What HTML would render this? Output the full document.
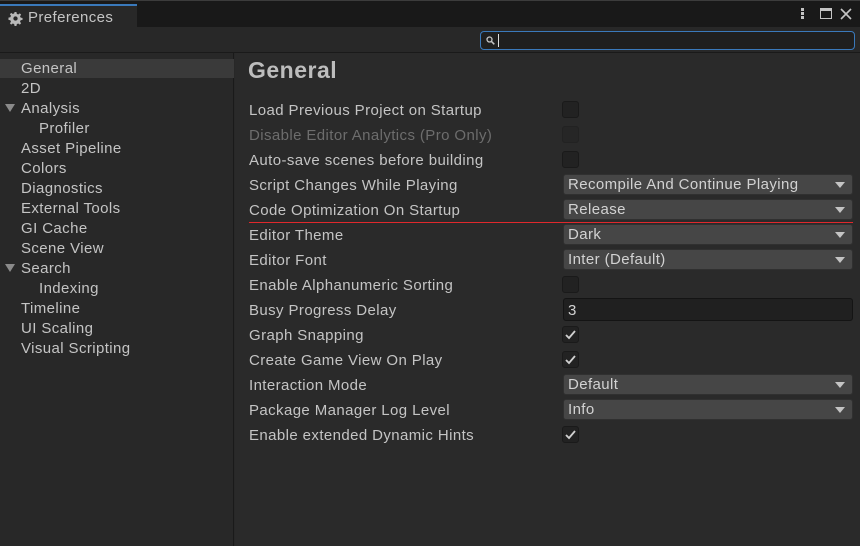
<!DOCTYPE html>
<html><head><meta charset="utf-8"><style>
*{margin:0;padding:0;box-sizing:border-box}
body{width:860px;height:546px;overflow:hidden;background:#282828;font-family:"Liberation Sans",sans-serif;font-size:15px;letter-spacing:0.4px;color:#c4c4c4;position:relative}
.abs{position:absolute}
.title{left:0;top:0;width:860px;height:27px;background:#191919;border-top:1px solid #3c3c3c}
.tab{left:0;top:4px;width:137px;height:23px;background:#282828;border-top:2px solid #3a79bb;color:#c4c4c4}
.toolbar{left:0;top:27px;width:860px;height:26px;background:#282828;border-bottom:1px solid #1a1a1a}
.search{left:480px;top:31px;width:375px;height:19px;border:1px solid #3a79bb;border-radius:4px;background:#1f1f1f}
.side{left:0;top:53px;width:234px;height:493px;border-right:1px solid #1a1a1a}
.main{left:235px;top:53px;width:625px;height:493px;background:#2a2a2a}
.it{position:absolute;left:21px;height:20px;line-height:20px;white-space:nowrap;margin-top:1px}
.sel{left:0;top:59px;width:234px;height:19px;background:#3a3a3a}
.lab{position:absolute;left:249px;line-height:20px;white-space:nowrap;margin-top:1px}
.dd{position:absolute;left:563px;width:290px;height:21px;background:#464646;border:1px solid #303030;border-radius:3px;padding-left:4px;line-height:20px;color:#d2d2d2}
.dd:after{content:"";position:absolute;right:7px;top:7px;border-left:5px solid transparent;border-right:5px solid transparent;border-top:6px solid #c4c4c4}
.cb{position:absolute;left:562px;width:17px;height:17px;background:#222;border:1px solid #1a1a1a;border-radius:3px}
.tri{position:absolute;left:5px;width:0;height:0;border-left:5px solid transparent;border-right:5px solid transparent;border-top:8px solid #8a8a8a}
</style></head><body>
<div class="abs title"></div>
<div class="abs tab">
<svg class="abs" style="left:8px;top:5px" width="15" height="15" viewBox="0 0 16 16"><path fill="#b8b8b8" d="M7 1h2l.4 2 1.5.7 1.7-1.2 1.4 1.4-1.2 1.7.7 1.5 2 .4v2l-2 .4-.7 1.5 1.2 1.7-1.4 1.4-1.7-1.2-1.5.7-.4 2H7l-.4-2-1.5-.7-1.7 1.2-1.4-1.4 1.2-1.7-.7-1.5-2-.4V7l2-.4.7-1.5-1.2-1.7 1.4-1.4 1.7 1.2 1.5-.7z"/><circle cx="8" cy="8" r="2.3" fill="#282828"/></svg>
<span class="abs" style="left:28px;top:3px;line-height:18px">Preferences</span></div>
<div class="abs" style="left:801px;top:8px;width:3px;height:3px;background:#c4c4c4;box-shadow:0 4px #c4c4c4,0 8px #c4c4c4"></div>
<div class="abs" style="left:820px;top:8px;width:12px;height:11px;border:1px solid #c4c4c4;border-top:3px solid #c4c4c4"></div>
<svg class="abs" style="left:840px;top:8px" width="12" height="12" viewBox="0 0 12 12"><path d="M1 1L11 11M11 1L1 11" stroke="#c4c4c4" stroke-width="1.6"/></svg>
<div class="abs toolbar"></div>
<div class="abs search"><svg class="abs" style="left:5px;top:4px" width="9" height="9" viewBox="0 0 9 9"><circle cx="3.5" cy="3.5" r="2.5" fill="none" stroke="#c4c4c4" stroke-width="1.3"/><path d="M5.3 5.3L8.3 8.3" stroke="#c4c4c4" stroke-width="1.5"/></svg><div class="abs" style="left:17px;top:2px;width:1px;height:13px;background:#ddd"></div></div>
<div class="abs side"></div>
<div class="abs main"></div>
<div class="abs sel"></div>
<div class="it" style="top:58px">General</div>
<div class="it" style="top:78px">2D</div>
<div class="tri" style="top:104px"></div><div class="it" style="top:98px">Analysis</div>
<div class="it" style="top:118px;left:39px">Profiler</div>
<div class="it" style="top:138px">Asset Pipeline</div>
<div class="it" style="top:158px">Colors</div>
<div class="it" style="top:178px">Diagnostics</div>
<div class="it" style="top:198px">External Tools</div>
<div class="it" style="top:218px">GI Cache</div>
<div class="it" style="top:238px">Scene View</div>
<div class="tri" style="top:264px"></div><div class="it" style="top:258px">Search</div>
<div class="it" style="top:278px;left:39px">Indexing</div>
<div class="it" style="top:298px">Timeline</div>
<div class="it" style="top:318px">UI Scaling</div>
<div class="it" style="top:338px">Visual Scripting</div>
<div class="abs" style="left:248px;top:57px;font-size:23px;font-weight:bold;color:#bdbdbd;letter-spacing:0.5px">General</div>
<div class="lab" style="top:100px">Load Previous Project on Startup</div><div class="cb" style="top:101px"></div>
<div class="lab" style="top:125px;color:#6d6d6d">Disable Editor Analytics (Pro Only)</div><div class="cb" style="top:126px;background:#262626;border-color:#222"></div>
<div class="lab" style="top:150px">Auto-save scenes before building</div><div class="cb" style="top:151px"></div>
<div class="lab" style="top:175px">Script Changes While Playing</div><div class="dd" style="top:174px">Recompile And Continue Playing</div>
<div class="lab" style="top:200px">Code Optimization On Startup</div><div class="dd" style="top:199px">Release</div>
<div class="abs" style="left:249px;top:222px;width:604px;height:1px;background:#e0282c;z-index:5"></div>
<div class="lab" style="top:225px">Editor Theme</div><div class="dd" style="top:224px">Dark</div>
<div class="lab" style="top:250px">Editor Font</div><div class="dd" style="top:249px">Inter (Default)</div>
<div class="lab" style="top:275px">Enable Alphanumeric Sorting</div><div class="cb" style="top:276px"></div>
<div class="lab" style="top:300px">Busy Progress Delay</div><div class="abs" style="left:563px;top:298px;width:290px;height:23px;background:#202020;border:1px solid #141414;border-radius:3px;padding-left:4px;line-height:23px;color:#d2d2d2">3</div>
<div class="lab" style="top:325px">Graph Snapping</div><div class="cb" style="top:326px"></div>
<div class="lab" style="top:350px">Create Game View On Play</div><div class="cb" style="top:351px"></div>
<div class="lab" style="top:375px">Interaction Mode</div><div class="dd" style="top:374px">Default</div>
<div class="lab" style="top:400px">Package Manager Log Level</div><div class="dd" style="top:399px">Info</div>
<div class="lab" style="top:425px">Enable extended Dynamic Hints</div><div class="cb" style="top:426px"></div>
<svg class="abs" style="left:564px;top:329px" width="13" height="11" viewBox="0 0 13 11"><path d="M2 6L5 9L11 2" fill="none" stroke="#d0d0d0" stroke-width="1.8"/></svg>
<svg class="abs" style="left:564px;top:354px" width="13" height="11" viewBox="0 0 13 11"><path d="M2 6L5 9L11 2" fill="none" stroke="#d0d0d0" stroke-width="1.8"/></svg>
<svg class="abs" style="left:564px;top:429px" width="13" height="11" viewBox="0 0 13 11"><path d="M2 6L5 9L11 2" fill="none" stroke="#d0d0d0" stroke-width="1.8"/></svg>
</body></html>
